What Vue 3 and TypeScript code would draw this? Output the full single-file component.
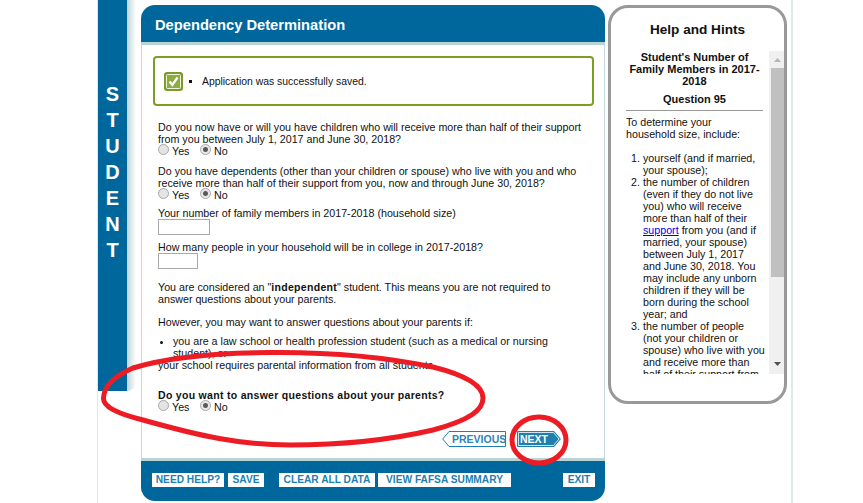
<script setup lang="ts">
const sideLetters: string[] = ['S', 'T', 'U', 'D', 'E', 'N', 'T']
</script>

<template>
  <div class="page">
    <div class="frame">
      <aside class="side">
        <div class="side-bar">
          <span v-for="(l, i) in sideLetters" :key="i">{{ l }}</span>
        </div>
      </aside>

      <main class="panel">
        <header class="panel-head">Dependency Determination</header>
        <div class="panel-body">
          <div class="saved">
            <span class="saved-icon">
              <svg width="19" height="19" viewBox="0 0 19 19">
                <rect x="0" y="0" width="19" height="19" rx="3" fill="#7a9a2a" />
                <rect x="2.5" y="2.5" width="14" height="14" rx="1" fill="#8fab46" stroke="#eef3dc" stroke-width="1" />
                <path d="M5.5 9.5 L8.3 13 L13.5 5.5" fill="none" stroke="#fff" stroke-width="2.2" />
              </svg>
            </span>
            <ul class="saved-list"><li>Application was successfully saved.</li></ul>
          </div>

          <div class="q q1">
            <div>Do you now have or will you have children who will receive more than half of their support from you between July 1, 2017 and June 30, 2018?</div>
            <div class="radios">
              <span class="radio"></span><span class="lab">Yes</span>
              <span class="radio on"></span><span class="lab">No</span>
            </div>
          </div>
          <div class="q q2">
            <div>Do you have dependents (other than your children or spouse) who live with you and who receive more than half of their support from you, now and through June 30, 2018?</div>
            <div class="radios">
              <span class="radio"></span><span class="lab">Yes</span>
              <span class="radio on"></span><span class="lab">No</span>
            </div>
          </div>
          <div class="q q3">
            <div>Your number of family members in 2017-2018 (household size)</div>
            <div class="input w52"></div>
          </div>
          <div class="q q4">
            <div>How many people in your household will be in college in 2017-2018?</div>
            <div class="input w40"></div>
          </div>
          <p class="para p1">You are considered an "<b class="ind">independent</b>" student. This means you are not required to answer questions about your parents.</p>
          <p class="para p2">However, you may want to answer questions about your parents if:</p>
          <ul class="bul">
            <li>you are a law school or health profession student (such as a medical or nursing student), or</li>
            <li>your school requires parental information from all students.</li>
          </ul>
          <div class="q q5">
            <div class="strong">Do you want to answer questions about your parents?</div>
            <div class="radios">
              <span class="radio"></span><span class="lab">Yes</span>
              <span class="radio on"></span><span class="lab">No</span>
            </div>
          </div>
          <div class="nav">
            <span class="prev">
              <svg class="nav-shape" width="64" height="16" viewBox="0 0 64 16">
                <path d="M7 0.5 H63.5 V15.5 H7 L0.7 8 Z" fill="#fff" stroke="#1f7fae" />
              </svg>
              <span class="nav-text">PREVIOUS</span>
            </span>
            <span class="next">
              <svg class="nav-shape" width="44" height="16" viewBox="0 0 44 16">
                <path d="M0.5 0.5 H37 L43.3 8 L37 15.5 H0.5 Z" fill="#1f7fae" stroke="#1f7fae" />
                <path d="M1.5 1.5 H36.5 L42 8 L36.5 14.5 H1.5 Z" fill="none" stroke="#fff" stroke-width="0.8" />
              </svg>
              <span class="nav-text w">NEXT</span>
            </span>
          </div>
        </div>
        <footer class="panel-foot">
          <span class="fbtn b-help">NEED HELP?</span>
          <span class="fbtn b-save">SAVE</span>
          <span class="fbtn b-clear">CLEAR ALL DATA</span>
          <span class="fbtn b-view">VIEW FAFSA SUMMARY</span>
          <span class="fbtn b-exit">EXIT</span>
        </footer>
      </main>

      <aside class="help">
        <h2 class="help-title">Help and Hints</h2>
        <div class="help-scroll">
          <div class="help-content">
            <div class="help-sub">Student's Number of Family Members in 2017-2018</div>
            <div class="help-q">Question 95</div>
            <div class="help-rule"></div>
            <p class="help-p">To determine your household size, include:</p>
            <ol class="help-ol">
              <li>yourself (and if married, your spouse);</li>
              <li>the number of children (even if they do not live you) who will receive more than half of their <a class="lnk">support</a> from you (and if married, your spouse) between July 1, 2017<br>and June 30, 2018. You may include any unborn children if they will be born during the school year; and</li>
              <li>the number of people<br>(not your children or spouse) who live with you and receive more than half of their support from you.</li>
            </ol>
          </div>
          <div class="sb">
            <svg class="arrow" width="7" height="4" viewBox="0 0 7 4"><path d="M0 4 L3.5 0 L7 4 Z" fill="#b4b4b4" /></svg>
            <div class="thumb"></div>
            <svg class="arrow" width="7" height="4" viewBox="0 0 7 4"><path d="M0 0 L3.5 4 L7 0 Z" fill="#50505a" /></svg>
          </div>
        </div>
      </aside>
    </div>

    <svg class="marks" width="863" height="503" viewBox="0 0 863 503">
      <path d="M103.5 398 C104 388 110 378 133 368 C165 358 210 353 270 352.5 C320 352 375 355 433 367 C465 375 483 385 483 398 C483 410 470 420 433 430 C390 440 340 445 290 445 C240 445 200 436 143 420 C115 413 103 406 103.5 398 Z" fill="none" stroke="#ed1c24" stroke-width="5" />
      <ellipse cx="539" cy="440" rx="27" ry="23" fill="none" stroke="#ed1c24" stroke-width="5" />
    </svg>
  </div>
</template>

<style>
html, body { margin: 0; padding: 0; background: #fff; }
</style>

<style scoped>
.page {
  position: relative;
  width: 863px;
  height: 503px;
  overflow: hidden;
  background: #fff;
  font-family: "Liberation Sans", Arial, sans-serif;
  font-size: 10.7px;
  line-height: 12px;
  color: #111;
}
.frame {
  display: flex;
  box-sizing: border-box;
  width: 696px;
  height: 503px;
  margin-left: 97px;
  border-left: 1px solid #dcebea;
  border-right: 2px solid #dcebea;
}
.side {
  width: 43px;
  flex: none;
}
.side-bar {
  box-sizing: border-box;
  width: 38px;
  height: 391px;
  padding: 81px 9px 0 0;
  background: linear-gradient(90deg, #00679c 0 29px, #bfd6d8 29px, #fff 38px);
  border-radius: 0 0 9px 0;
  display: flex;
  flex-direction: column;
  align-items: center;
  color: #fff;
  font-weight: bold;
  font-size: 20px;
  line-height: 26px;
}
.panel {
  width: 464px;
  margin-top: 5px;
  height: 496px;
  flex: none;
  display: flex;
  flex-direction: column;
}
.panel-head {
  height: 37px;
  line-height: 40px;
  padding-left: 14px;
  background: #00679c;
  border-bottom: 3px solid #b9d3d6;
  border-radius: 14px 14px 0 0;
  color: #fff;
  font-weight: bold;
  font-size: 14.7px;
}
.panel-body {
  position: relative;
  flex: 1;
  box-sizing: border-box;
  padding: 11px 17px 0 16px;
  border-left: 1px solid #c3d9da;
  border-right: 1px solid #c3d9da;
  min-height: 0;
}
.saved {
  display: flex;
  align-items: center;
  box-sizing: border-box;
  height: 50px;
  width: 441px;
  margin-left: -5px;
  border: 2px solid #7a9f24;
  border-radius: 4px;
  padding-left: 9px;
}
.saved-icon { display: block; height: 19px; }
.saved-list {
  margin: 1px 0 0;
  padding: 0 0 0 19px;
  font-size: 10.4px;
  list-style: square;
}
.q { width: 425px; }
.q1 { margin-top: 15px; }
.q2 { margin-top: 8px; }
.q3 { margin-top: 6px; }
.q4 { margin-top: 6px; }
.radios {
  display: flex;
  align-items: center;
  height: 12px;
}
.radio {
  box-sizing: border-box;
  width: 11px;
  height: 11px;
  border-radius: 50%;
  border: 1px solid #a9a9a9;
  background: #e4e4e4;
  margin-top: -3px;
}
.radio.on {
  background: radial-gradient(circle, #5a5a5a 0 2px, #e8e8e8 3px);
}
.lab { margin-left: 3px; width: 28px; }
.input {
  box-sizing: border-box;
  height: 16px;
  background: #fff;
  border: 1px solid #a9a9a9;
}
.w52 { width: 52px; }
.w40 { width: 40px; }
.para { margin: 0; width: 425px; }
.ind { letter-spacing: 0.3px; font-size: 10.5px; }
.p1 { margin-top: 12px; }
.p2 { margin-top: 11px; }
.bul {
  margin: 7px 0 0 0;
  padding: 0 0 0 15px;
  width: 410px;
}
.bul li + li {
  list-style: none;
  margin-left: -15px;
}
.strong { font-weight: bold; font-size: 10.5px; letter-spacing: 0.3px; }
.q5 { margin-top: 18px; }
.nav {
  position: absolute;
  right: 43px;
  top: 386px;
  display: flex;
  gap: 11px;
}
.prev, .next {
  position: relative;
  display: block;
  height: 16px;
}
.prev { width: 64px; }
.next { width: 44px; }
.nav-shape { position: absolute; left: 0; top: 0; }
.nav-text {
  position: relative;
  display: block;
  padding-left: 10px;
  line-height: 16px;
  font-weight: bold;
  font-size: 10.5px;
  color: #2f86b2;
}
.nav-text.w { color: #fff; padding-left: 3px; }
.panel-foot {
  height: 40px;
  flex: none;
  box-sizing: content-box;
  background: #00679c;
  border-top: 3px solid #b9d3d6;
  border-radius: 0 0 14px 14px;
  display: flex;
  align-items: flex-start;
  padding-left: 11px;
}
.fbtn {
  display: block;
  height: 14px;
  margin-top: 12px;
  line-height: 14px;
  text-align: center;
  background: #fff;
  color: #1f7fae;
  font-weight: bold;
  font-size: 10.2px;
  white-space: nowrap;
}
.b-help { width: 72px; }
.b-save { width: 36px; margin-left: 4px; }
.b-clear { width: 96px; margin-left: 15px; }
.b-view { width: 133px; margin-left: 3px; }
.b-exit { width: 32px; margin-left: 52px; }
.help {
  box-sizing: border-box;
  width: 179px;
  height: 399px;
  margin: 5px 0 0 3px;
  flex: none;
  border: 3px solid #999;
  border-radius: 20px;
  background: #fff;
}
.help-title {
  margin: 0;
  font-size: 13.6px;
  line-height: 16px;
  padding-top: 14px;
  text-align: center;
  font-weight: bold;
  color: #111;
}
.help-scroll {
  display: flex;
  height: 323px;
  margin-top: 13px;
  padding-left: 15px;
  overflow: hidden;
}
.help-content {
  width: 140px;
  flex: none;
  height: 323px;
  overflow: hidden;
  font-size: 10.7px;
}
.help-sub {
  text-align: center;
  font-weight: bold;
  width: 137px;
  font-size: 11px;
}
.help-q {
  text-align: center;
  width: 137px;
  font-weight: bold;
  margin-top: 6px;
  font-size: 11px;
}
.help-rule {
  height: 1px;
  background: #999;
  margin-top: 5px;
  width: 137px;
}
.help-p { margin: 5px 0 0 0; width: 125px; }
.help-ol {
  margin: 12px 0 0 0;
  padding: 0 0 0 17px;
}
.lnk { color: #00e; text-decoration: underline; }
.sb {
  width: 15px;
  margin-left: 3px;
  background: #f0f0f0;
  display: flex;
  flex-direction: column;
  align-items: flex-end;
  box-sizing: border-box;
  padding: 7px 0 8px;
  flex: none;
}
.thumb {
  width: 13px;
  height: 209px;
  background: #c0c0c0;
  margin: 6px 0 0;
  flex: none;
}
.arrow { flex: none; margin-right: 3px; }
.sb .arrow:last-child { margin-top: auto; }
.marks {
  position: absolute;
  left: 0;
  top: 0;
  pointer-events: none;
}
</style>
